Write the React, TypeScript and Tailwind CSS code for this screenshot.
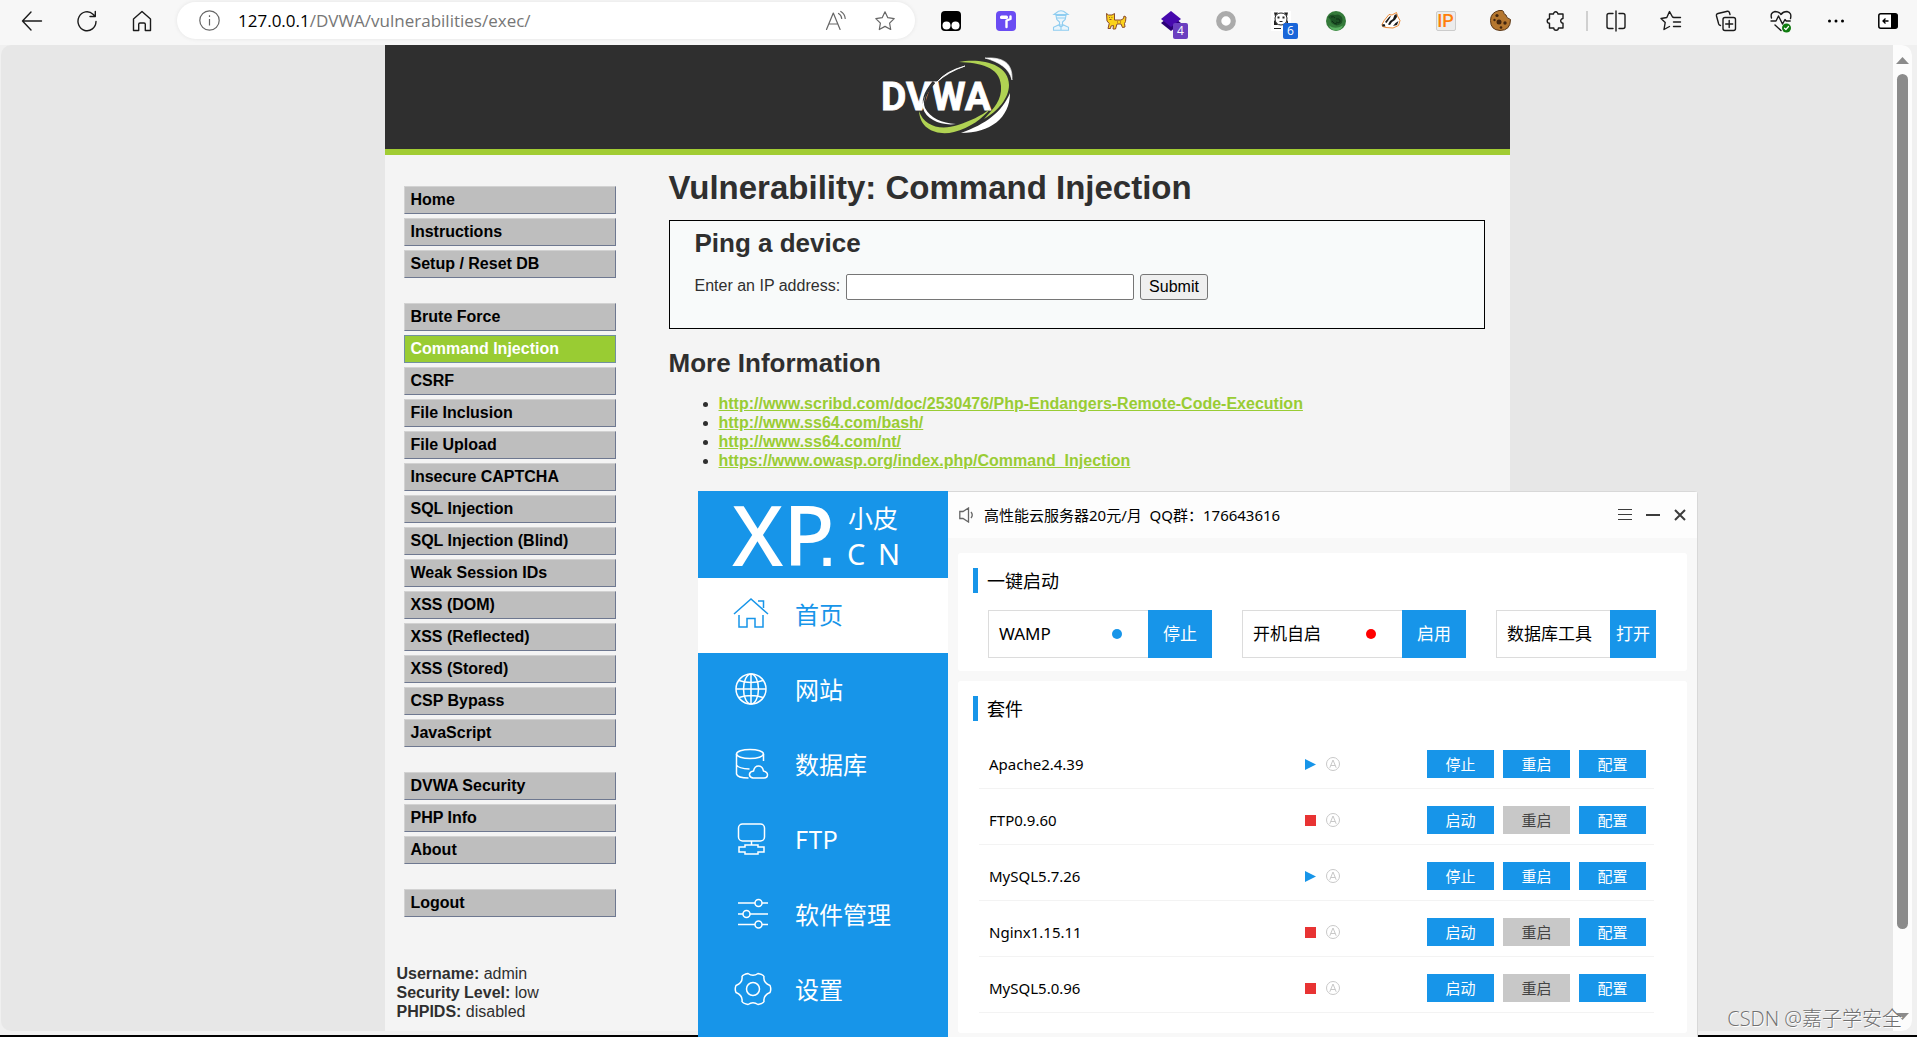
import type { ReactNode } from 'react'

const MENU = [
  ['Home', 'Instructions', 'Setup / Reset DB'],
  [
    'Brute Force', 'Command Injection', 'CSRF', 'File Inclusion', 'File Upload', 'Insecure CAPTCHA', 'SQL Injection',
    'SQL Injection (Blind)', 'Weak Session IDs', 'XSS (DOM)', 'XSS (Reflected)', 'XSS (Stored)', 'CSP Bypass', 'JavaScript',
  ],
  ['DVWA Security', 'PHP Info', 'About'],
  ['Logout'],
]
const ACTIVE = 'Command Injection'

const LINKS = [
  'http://www.scribd.com/doc/2530476/Php-Endangers-Remote-Code-Execution',
  'http://www.ss64.com/bash/',
  'http://www.ss64.com/nt/',
  'https://www.owasp.org/index.php/Command_Injection',
]

const SERVICES = [
  { name: 'Apache2.4.39', running: true },
  { name: 'FTP0.9.60', running: false },
  { name: 'MySQL5.7.26', running: true },
  { name: 'Nginx1.15.11', running: false },
  { name: 'MySQL5.0.96', running: false },
]

/* ---------- browser toolbar ---------- */

function ToolButton({ label, children, badge }: { label: string; children: ReactNode; badge?: ReactNode }) {
  return (
    <button type="button" aria-label={label} className="relative flex h-[41px] w-[55px] shrink-0 items-center justify-center text-[#1b1b1b]">
      {children}
      {badge}
    </button>
  )
}

function Line({ d, size = 22, width = 1.4, className = '' }: { d: string; size?: number; width?: number; className?: string }) {
  return (
    <svg width={size} height={size} viewBox="0 0 22 22" fill="none" stroke="currentColor" strokeWidth={width} strokeLinecap="round" strokeLinejoin="round" className={className}>
      <path d={d} />
    </svg>
  )
}

const STAR = 'M11 1.8l2.8 5.9 6.4.9-4.6 4.5 1.1 6.4L11 16.4l-5.7 3.1 1.1-6.4L1.8 8.6l6.4-.9z'

function Toolbar() {
  return (
    <header className="flex h-[45px] shrink-0 items-start bg-[#f7f7f7] pr-1 pl-1">
      <ToolButton label="Back"><Line d="M20.500 11H1.500M10 2L1.500 11l8.500 9" /></ToolButton>
      <ToolButton label="Refresh"><Line d="M20 11.500A9 9.500 0 1 1 17 4.200L19 6.200M19.300 1.500V6.500H14" /></ToolButton>
      <ToolButton label="Home"><Line d="M11 1.500L19.500 9v11.500h-5.200v-6.200q0-1.300-1.300-1.300h-4q-1.300 0-1.300 1.300v6.200H2.500V9z" /></ToolButton>

      <div className="mt-[2px] ml-2 flex h-[37px] min-w-0 flex-1 items-center rounded-full bg-white pr-[2px] pl-[22px] shadow-[0_0_4px_rgba(0,0,0,0.08)]">
        <svg width="21" height="21" viewBox="0 0 21 21" fill="none" stroke="#666" strokeWidth="1.2">
          <circle cx="10.500" cy="10.500" r="9.700" />
          <path d="M10.500 9v6.500M10.500 5.300v1.600" />
        </svg>
        <p className="ml-[18px] flex-1 truncate font-['Open_Sans',sans-serif] text-[17px] text-[#767676]">
          <span className="text-black">127.0.0.1</span>/DVWA/vulnerabilities/exec/
        </p>
        <button type="button" aria-label="Read aloud" className="flex w-[49px] justify-center text-[#666]">
          <Line d="M1.500 19.500L8.300 3l6.800 16.500M4 14h8.600M13.500 3.500c2 1 3 3 3.200 5M15.800 1.500c2.700 1.600 4.200 4 4.400 7" width={1.2} />
        </button>
        <button type="button" aria-label="Favorite" className="flex w-[49px] justify-center text-[#666]">
          <Line d={STAR} width={1.2} />
        </button>
        <span className="w-1" />
      </div>

      <div className="ml-2 flex shrink-0 items-center">
        <ToolButton label="Tampermonkey">
          <svg width="20" height="20" viewBox="0 0 20 20"><rect width="20" height="20" rx="4" /><circle cx="5.500" cy="14.500" r="4" fill="#fff" /><circle cx="14.500" cy="14.500" r="4" fill="#fff" /></svg>
        </ToolButton>
        <ToolButton label="Toolbox">
          <svg width="20" height="20" viewBox="0 0 20 20">
            <rect width="20" height="20" rx="4" fill="#6a4cf3" />
            <rect x="4" y="4.500" width="8" height="3.500" rx="1.500" fill="#fff" />
            <path d="M10.500 16V9.500l4-1.500V5.500" stroke="#fff" strokeWidth="2.400" strokeLinecap="round" strokeLinejoin="round" fill="none" />
          </svg>
        </ToolButton>
        <ToolButton label="Agent">
          <svg width="18" height="21" viewBox="0 0 18 21" fill="#e9f5fc" stroke="#8fcdf0" strokeWidth="1.100">
            <path d="M4 3Q9-1.500 14 3l2 1.500H2L4 3zM4 5.500h10l-.8 4L10.500 12v3h-3v-3L4.800 9.500zM5 8h8M1.500 20.300v-3L6.500 15 9 17l2.500-2 5 2.300v3zM9 17v3" />
          </svg>
        </ToolButton>
        <ToolButton label="Cat">
          <svg width="22" height="18" viewBox="0 0 22 18" fill="#fbd21b" stroke="#8a4a2c" strokeWidth="1">
            <path d="M1.500 1.500l2 1.500h3.500L9.500 1.500V8h6.500l2.500-1.500.5-2.500 2 1-.5 4.500-1 2 .5 3.500-2.500.5-1.500-3.500h-4L10.500 17H8l.5-3.500L6 14l-.5 2.500H3l1.200-5L2 9z" />
            <path d="M4 5.500h.8M6.500 5.500h.8M4.500 7.500h2M12 10h1M15 10h1" />
          </svg>
        </ToolButton>
        <ToolButton
          label="Wappalyzer"
          badge={<span className="absolute top-[23px] left-[30px] flex h-4 w-[15px] items-center justify-center rounded-[2px] bg-[#6b3fc0] font-['Open_Sans',sans-serif] text-xs text-white">4</span>}
        >
          <svg width="20" height="20" viewBox="0 0 20 20"><path d="M10 4l10 8-10 8-10-8z" fill="#2b0076" /><path d="M10 0l10 8-10 8L0 8z" fill="#4608ad" /></svg>
        </ToolButton>
        <ToolButton label="Recorder">
          <svg width="20" height="20" viewBox="0 0 20 20"><circle cx="10" cy="10" r="7.300" fill="#fff" stroke="#ababab" strokeWidth="5.200" /></svg>
        </ToolButton>
        <ToolButton
          label="Panda"
          badge={<span className="absolute top-[23px] left-[30px] flex h-4 w-[15px] items-center justify-center rounded-[2px] bg-[#1a66d9] font-['Open_Sans',sans-serif] text-xs text-white">6</span>}
        >
          <svg width="20" height="20" viewBox="0 0 20 20">
            <rect width="20" height="20" fill="#fff" />
            <path d="M4 7Q5 2 10 2t6 5q0 7-6 7T4 7z" fill="#fff" stroke="#222" />
            <path d="M3 1.500h4l-3 4zM17 1.500h-4l3 4zM3 9l4 5H3zM17 9l-3 5h3zM6.500 5.500h2v2h-2zM11.500 5.500h2v2h-2zM8.500 10h3v1h-3zM3 17h7v1H3z" fill="#222" />
          </svg>
        </ToolButton>
        <ToolButton label="FoxyProxy">
          <svg width="20" height="20" viewBox="0 0 20 20">
            <circle cx="10" cy="10" r="10" fill="#347a3a" />
            <path d="M2 6Q5 2.500 9 4l3-.5q5 1.500 4.500 6-.5 4.500-6 5-6-1.500-6-6z" fill="#1d5225" />
            <path d="M5 6q3-1 4 1M10 8q4-1 4 2t-4 1M6 10q2 3 5 3" stroke="#0f3316" fill="none" />
            <path d="M3 14.500q6 4.500 14 0-2 5-7 5t-7-5z" fill="#5bb062" />
          </svg>
        </ToolButton>
        <ToolButton label="Badger">
          <svg width="20" height="17" viewBox="0 0 20 17">
            <path d="M1 12.500Q3 8 6 5l2-2.500L11 3l4.500-2.500L16.500 4l2.500 4.500-1.500 5L12 16l-7-.5-3.500-1z" fill="#fff" stroke="#ef8a34" />
            <path d="M1 12.500l2.500-.5 1 2.500-3 0zM4 10L8 5l2-1.500L9 6l-3.500 5zM7 12.500l2-3.500 3-2 1.500-4L15.500 2l.5 3-2 3-3 2-2 3zM12 14l2.500-3 3-2-1.500 4z" fill="#1b1b1b" />
          </svg>
        </ToolButton>
        <ToolButton label="IP lookup">
          <span className="flex h-5 w-5 items-center justify-center rounded-[2px] border border-[#ccc] bg-[#ececec] font-['Roboto',sans-serif] text-lg font-medium text-[#ff7f0a]">IP</span>
        </ToolButton>
        <ToolButton label="Cookie editor">
          <svg width="21" height="21" viewBox="0 0 21 21">
            <path d="M9 .5q4-.5 4.500 1 0 3 2.500 3.500 0 3 4.500 4.500 0 11-10.500 11Q.5 20 .5 10.500.5 2.500 9 .5z" fill="#b5772f" stroke="#5a3717" />
            <g fill="#42260f"><circle cx="9" cy="12" r="2.500" /><circle cx="7" cy="5.500" r="1.600" /><circle cx="15" cy="13" r="1.700" /><circle cx="4.500" cy="10" r="1.200" /><circle cx="11" cy="17.500" r="1.300" /></g>
          </svg>
        </ToolButton>
        <ToolButton label="Extensions">
          <Line d="M4.500 4H8.500a2.200 2.200 0 1 1 4.400 0H18v4.500a2.200 2.200 0 1 0 0 4.600V18h-4.600a2.300 2.300 0 0 1-4.600 0H4.500v-4.700a2.200 2.200 0 1 1 0-4.600z" />
        </ToolButton>
        <span className="ml-[3px] h-5 w-[2px] bg-[#d0d0d0]" />
        <ToolButton label="Split screen"><Line d="M11 1v20M8 3.500H4q-2 0-2 2v11q0 2 2 2h4M14 3.500h4q2 0 2 2v11q0 2-2 2h-4" /></ToolButton>
        <ToolButton label="Favorites"><Line d="M14 7.500L12.500 7 9.500 1.500 6.800 7.500 1 8.500l4.200 4-1.200 7 5.500-3M13.500 7.500h7M13.500 12h7M13.500 16.500h7" /></ToolButton>
        <ToolButton label="Collections"><Line d="M15 4.500l-.6-2q-.5-1.500-2-1.200L3 3.500Q1 4 1.500 6l2.200 8q.4 1.300 1.800 1.500M10 7.500h8.500q2 0 2 2v9q0 2-2 2H10q-2 0-2-2v-9q0-2 2-2zM14.200 10.500v7M10.700 14h7" /></ToolButton>
        <ToolButton label="Browser essentials">
          <svg width="24" height="24" viewBox="0 0 24 24" fill="none" stroke="#1b1b1b" strokeWidth="1.400" strokeLinecap="round" strokeLinejoin="round">
            <path d="M2.500 9Q1 3.500 6 2.500q4 0 6 3 2-3 6-3 5 1 3.500 7M2 12h5l2.500-5 4 8 2.500-4.500 1.200 1.500h4M6 16l6 5.500" />
            <circle cx="17.500" cy="19" r="4.500" fill="#107c10" stroke="none" />
            <path d="M15.500 19.200l1.400 1.300 2.600-3" stroke="#fff" strokeWidth="1.200" />
          </svg>
        </ToolButton>
        <ToolButton label="Settings and more">
          <svg width="18" height="4" viewBox="0 0 18 4"><circle cx="2.500" cy="2" r="1.500" /><circle cx="9" cy="2" r="1.500" /><circle cx="15.500" cy="2" r="1.500" /></svg>
        </ToolButton>
        <button type="button" aria-label="Sidebar" className="flex h-[41px] w-[50px] items-center justify-center">
          <svg width="20" height="16" viewBox="0 0 20 16"><rect x=".8" y=".8" width="18.400" height="14.400" rx="2" fill="#fff" stroke="#000" strokeWidth="1.500" /><path d="M13 1h5l1.500 1v12l-1.500 1h-5z" /><path d="M10.500 8H5M7.500 5.500L5 8l2.500 2.500" stroke="#000" strokeWidth="1.300" fill="none" /></svg>
        </button>
      </div>
    </header>
  )
}

/* ---------- DVWA page ---------- */

function DvwaLogo() {
  return (
    <svg width="130" height="75" viewBox="0 0 130 75" role="img" aria-label="DVWA" className="overflow-visible">
      <path d="M83 8Q64 13 55 24Q66 14 83 8z" fill="#fff" stroke="#fff" strokeWidth=".8" />
      <text x="-1" y="52" fontFamily="Roboto,'Open Sans',sans-serif" fontWeight="700" fontSize="39" fill="#fff" stroke="#fff" strokeWidth=".8">DVWA</text>
      <path d="M52 24C43 35 40 43 44 51C50 62 62 66 74 66" fill="none" stroke="#2f2f2f" strokeWidth="3" />
      <path d="M53 23C44 34 40 42 43 50C48 60 60 65 74 66C60 68 44 62 41 50C40 42 45 33 53 23z" fill="#fff" />
      <path d="M77 4C95 0 127 4 127 27C127 40 116 53 102 61C112 50 120 42 119 28C118 8 97 5 77 4z" fill="#b0d253" />
      <path d="M37 53C38 72 56 78 72 74C88 70 101 60 108 51C99 58 88 63 76 67C58 73 42 68 37 53z" fill="#b0d253" />
      <path d="M103 0C120-1 131 4 130 22C127 10 117 4 103 0z" fill="#fff" stroke="#fff" strokeWidth=".6" />
      <path d="M128 35C128 60 108 75 79 75C104 66 120 54 128 35z" fill="#fff" />
    </svg>
  )
}

function MenuLink({ label }: { label: string }) {
  const tone = label === ACTIVE
    ? 'border-[#7190a0] bg-[#99cc33] text-white'
    : 'border-t-[#d2d2d2] border-r-[#6e7890] border-b-[#6e7890] border-l-[#d2d2d2] bg-[#bebebe] text-black'
  return (
    <li>
      <a href="#" className={`block h-7 border pl-[6px] leading-[26px] font-bold ${tone}`}>{label}</a>
    </li>
  )
}

function DvwaPage() {
  return (
    <div className="mx-auto min-h-full w-[1125px] max-w-full bg-[#f4f4f4] font-['Liberation_Sans',sans-serif] text-base text-[#2f2f2f]">
      <div className="flex h-[110px] justify-center border-b-6 border-[#a1cc33] bg-[#2f2f2f] pt-[13px]">
        <DvwaLogo />
      </div>
      <div className="flex">
        <aside className="w-[231px] shrink-0 pt-[31px] pl-3">
          <nav className="ml-[7px] space-y-[25px]">
            {MENU.map((group) => (
              <ul key={group[0]} className="space-y-1">
                {group.map((label) => <MenuLink key={label} label={label} />)}
              </ul>
            ))}
          </nav>
          <div className="mt-[47px] leading-[19px]">
            <p><b>Username:</b> admin</p>
            <p><b>Security Level:</b> low</p>
            <p><b>PHPIDS:</b> disabled</p>
          </div>
        </aside>

        <main className="ml-[53px] min-w-0 flex-1 pt-[13px] pr-[25px]">
          <h1 className="text-[33px] leading-10 font-bold">Vulnerability: Command Injection</h1>
          <section className="mt-3 border border-black bg-[#f8fafa] px-[25px] pt-[6px] pb-7">
            <h2 className="text-[26px] leading-8 font-bold">Ping a device</h2>
            <form className="mt-[15px] flex gap-[6px]" onSubmit={(e) => e.preventDefault()}>
              <label htmlFor="ip" className="leading-6">Enter an IP address:</label>
              <input id="ip" type="text" className="h-[26px] w-[288px] rounded-[2px] border border-[#767676] bg-white px-1" />
              <button type="submit" className="h-[26px] rounded-[3px] border border-[#767676] bg-[#efefef] px-2 leading-6 text-black">Submit</button>
            </form>
          </section>
          <h2 className="mt-[18px] text-[26px] leading-8 font-bold">More Information</h2>
          <ul className="mt-[15px] list-disc pl-[50px] leading-[19px]">
            {LINKS.map((href) => (
              <li key={href}><a href={href} className="font-bold text-[#99cc33] underline">{href}</a></li>
            ))}
          </ul>
        </main>
      </div>
    </div>
  )
}

function Scrollbar() {
  return (
    <div className="flex w-[19px] shrink-0 flex-col items-center bg-[#fcfcfc] pt-3 pb-[11px]">
      <svg width="13" height="7" viewBox="0 0 13 7" fill="#8b8b8b"><path d="M6.500 0L13 7H0z" /></svg>
      <span className="mt-[10px] mb-[84px] w-[11px] flex-1 rounded-full bg-[#8b8b8b]" />
      <svg width="13" height="7" viewBox="0 0 13 7" fill="#8b8b8b"><path d="M6.500 7L0 0h13z" /></svg>
    </div>
  )
}

/* ---------- phpStudy window ---------- */

const NAV: { label: string; icon: ReactNode }[] = [
  {
    label: '首页',
    icon: <path d="M1 18L18 3l17 15M25 5h5.500v7M6 19v12h8v-8.500h8V31h8V19" />,
  },
  {
    label: '网站',
    icon: <><circle cx="18" cy="18" r="15" /><ellipse cx="18" cy="18" rx="7.500" ry="15" /><path d="M18 3v30M3 18h30M6 9.500q12 4 24 0M6 26.500q12-4 24 0" /></>,
  },
  {
    label: '数据库',
    icon: <><ellipse cx="17" cy="8" rx="13.500" ry="4.500" /><path d="M3.500 8v20q1 4 12 4M30.500 8v7M3.500 19q2 3.500 13 4M20 32q-4-1-3.500-4 .5-2.500 4-3 1-5 5-5t5 5q4 1 4 3.800 0 3.200-3.500 3.200z" /></>,
  },
  {
    label: 'FTP',
    icon: <><rect x="5.500" y="3" width="26" height="17" rx="4" /><path d="M18.500 20v4M12 24h13v2h6v5h-6v2H12v-2H6v-5h6z" /></>,
  },
  {
    label: '软件管理',
    icon: <><path d="M5 7h17M29 7h6M5 18h5M17 18h18M5 28.500h17M29 28.500h6" /><circle cx="25.500" cy="7" r="3.500" /><circle cx="13.500" cy="18" r="3.500" /><circle cx="25.500" cy="28.500" r="3.500" /></>,
  },
  {
    label: '设置',
    icon: <><circle cx="20" cy="18" r="6.500" /><path d="M15 2.500q5 3.500 10 0 5 1 6 3-1 6 6 9 1.500 3.500 0 7-7 3-6 9-1 2-6 3-5-3.500-10 0-5-1-6-3 1-6-6-9-1.500-3.500 0-7 7-3 6-9 1-2 6-3z" /></>,
  },
]

function XpLogo() {
  return (
    <svg width="170" height="87" viewBox="0 0 170 87" fill="#fff" role="img" aria-label="XP.CN" className="ml-[33px] block overflow-visible">
      <text x="1" y="75" fontFamily="'Noto Sans',sans-serif" fontWeight="500" fontSize="84">
        XP<tspan dx="-18" fontFamily="'Liberation Sans',sans-serif" fontSize="76">.</tspan>
      </text>
      <text x="117" y="37" fontFamily="'Noto Sans CJK SC',sans-serif" fontSize="25">小皮</text>
      <text x="116" y="74" fontFamily="'Noto Sans',sans-serif" fontSize="29">C</text>
      <text x="147" y="74" fontFamily="'Noto Sans',sans-serif" fontSize="29">N</text>
    </svg>
  )
}

function SectionTitle({ children }: { children: ReactNode }) {
  return (
    <h3 className="ml-[15px] flex h-[25px] items-center border-l-5 border-[#1795e9] pl-[9px] text-lg text-black">{children}</h3>
  )
}

function QuickItem({ label, action, dot, small }: { label: string; action: string; dot?: string; small?: boolean }) {
  return (
    <div className="flex h-12 text-[17px]">
      <div className={`flex items-center justify-between border border-r-0 border-[#dcdcdc] pl-[10px] text-black ${small ? 'w-[114px]' : 'w-[160px] pr-[26px]'}`}>
        {label}
        {dot && <span className={`h-[10px] w-[10px] rounded-full ${dot}`} />}
      </div>
      <button type="button" className={`bg-[#1795e9] text-white ${small ? 'w-[46px]' : 'w-16'}`}>{action}</button>
    </div>
  )
}

function ActionButton({ children, disabled }: { children: ReactNode; disabled?: boolean }) {
  return (
    <button type="button" disabled={disabled} className={`h-7 w-[67px] ${disabled ? 'bg-[#c8c8c8] text-[#444]' : 'bg-[#1795e9] text-white'}`}>
      {children}
    </button>
  )
}

function PhpStudyWindow() {
  return (
    <div className="absolute top-[491px] bottom-0 left-[698px] flex w-[1000px] font-['Noto_Sans','Noto_Sans_CJK_SC',sans-serif]">
      <aside className="w-[250px] shrink-0 bg-[#1795e9] text-white">
        <XpLogo />
        <nav>
          {NAV.map((item, i) => (
            <a
              key={item.label}
              href="#"
              className={`flex h-[75px] items-center pb-[3px] pl-[35px] font-['Noto_Sans_CJK_SC',sans-serif] text-2xl ${i === 0 ? 'bg-white text-[#1795e9]' : 'text-white'}`}
            >
              <svg width="40" height="36" viewBox="0 0 40 36" fill="none" stroke="currentColor" strokeWidth="1.500">{item.icon}</svg>
              <span className="ml-[22px]">{item.label}</span>
            </a>
          ))}
        </nav>
      </aside>

      <div className="flex min-w-0 flex-1 flex-col rounded-tr-sm border-t border-r border-[#d8d8d8] bg-[#f8f8f8]">
        <div className="flex h-[46px] shrink-0 items-center bg-[#fdfdfd] pr-[11px] pl-[11px]">
          <svg width="15" height="16" viewBox="0 0 15 16" fill="none" stroke="#666" strokeWidth="1.300"><path d="M.8 4.500H4L9.500 1v14L4 11.500H.8zM12 5q2.500 3 0 6" /></svg>
          <p className="ml-[10px] flex-1 text-[15px] whitespace-pre text-black">高性能云服务器20元/月  QQ群：176643616</p>
          <div className="flex items-center gap-[14px] text-[#3c3c3c]">
            <button type="button" aria-label="Menu"><svg width="14" height="12" viewBox="0 0 14 12" stroke="currentColor"><path d="M0 .5h14M0 5.500h14M0 10.500h14" /></svg></button>
            <button type="button" aria-label="Minimize"><svg width="14" height="12" viewBox="0 0 14 12" stroke="currentColor" strokeWidth="2"><path d="M0 6h14" /></svg></button>
            <button type="button" aria-label="Close"><svg width="12" height="12" viewBox="0 0 12 12" stroke="currentColor" strokeWidth="2"><path d="M1 1l10 10M11 1L1 11" /></svg></button>
          </div>
        </div>

        <section className="mx-[10px] mt-[15px] h-[118px] shrink-0 rounded-[3px] bg-white pt-[15px]">
          <SectionTitle>一键启动</SectionTitle>
          <div className="mt-[17px] flex gap-[30px] pl-[30px]">
            <QuickItem label="WAMP" action="停止" dot="bg-[#1795e9]" />
            <QuickItem label="开机自启" action="启用" dot="bg-[#ff0000]" />
            <QuickItem label="数据库工具" action="打开" small />
          </div>
        </section>

        <section className="mx-[10px] mt-[10px] shrink-0 rounded-[3px] bg-white pt-[15px] pb-5">
          <SectionTitle>套件</SectionTitle>
          <ul className="mt-3 mr-[33px] ml-[21px] text-[15px]">
            {SERVICES.map((s) => (
              <li key={s.name} className="flex h-14 items-center border-b border-[#f3f3f3] pt-[7px] pr-2 pl-[10px] text-black">
                <span className="flex-1">{s.name}</span>
                <svg width="11" height="11" viewBox="0 0 11 11">
                  {s.running ? <path d="M0 0l11 5.500L0 11z" fill="#1795e9" /> : <path d="M0 0h11v11H0z" fill="#e83333" />}
                </svg>
                <svg width="14" height="14" viewBox="0 0 14 14" fill="none" stroke="#c8c8c8" className="ml-[10px]">
                  <circle cx="7" cy="7" r="6.500" />
                  <path d="M3.800 10.800L7 3l3.200 7.800M4.800 8.500h4.400" />
                </svg>
                <div className="ml-[87px] flex gap-[9px]">
                  <ActionButton>{s.running ? '停止' : '启动'}</ActionButton>
                  <ActionButton disabled={!s.running}>重启</ActionButton>
                  <ActionButton>配置</ActionButton>
                </div>
              </li>
            ))}
          </ul>
        </section>
      </div>
    </div>
  )
}

export default function App() {
  return (
    <div className="relative flex h-screen flex-col overflow-hidden bg-[#f0f0f0]">
      <Toolbar />
      <div className="mr-[5px] mb-1 ml-px flex min-h-0 flex-1 overflow-hidden rounded-[10px] bg-[#e7e7e7]">
        <div className="min-w-0 flex-1 overflow-hidden">
          <DvwaPage />
        </div>
        <Scrollbar />
      </div>
      <div className="h-[2px] shrink-0 bg-black" />
      <div className="absolute inset-0 overflow-hidden">
        <PhpStudyWindow />
        <p className="absolute right-[15px] bottom-1 font-['Open_Sans','Noto_Sans_CJK_SC',sans-serif] text-xl font-light text-[#707070] [text-shadow:1px_1px_0_#fff]">
          CSDN @嘉子学安全
        </p>
      </div>
    </div>
  )
}
